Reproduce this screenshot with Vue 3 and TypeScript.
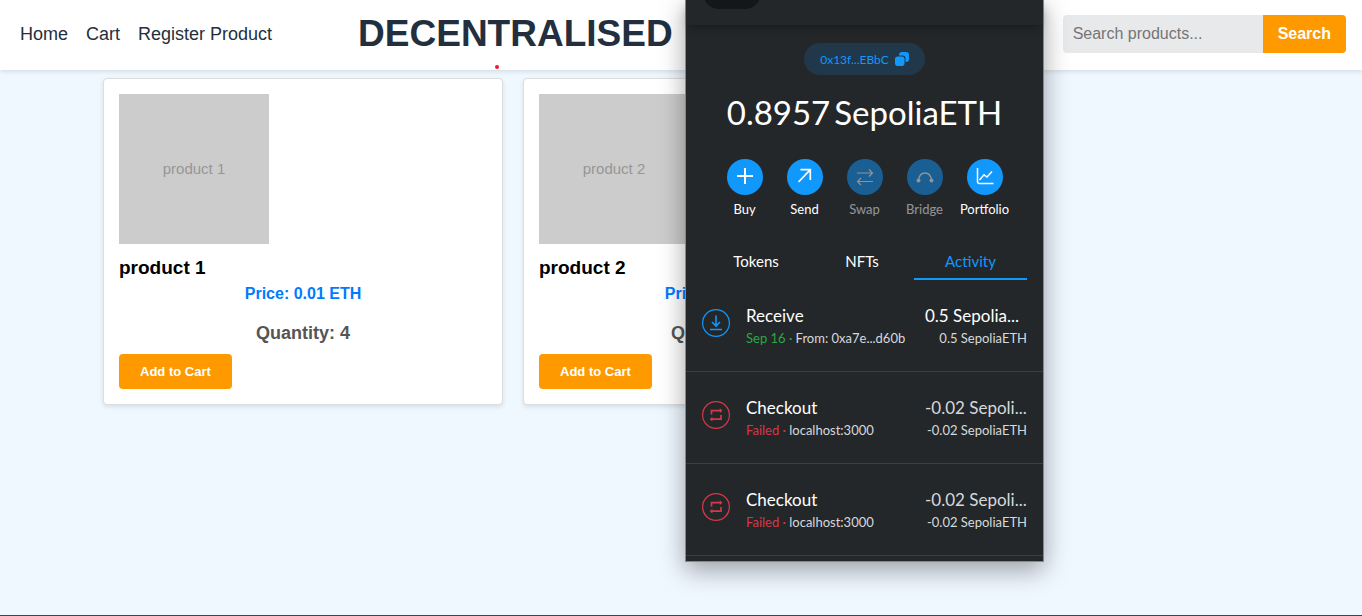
<script setup lang="ts">
import { ref } from 'vue'

interface Product {
  name: string
  price: string
  quantity: number
}

interface WalletAction {
  label: string
  icon: 'buy' | 'send' | 'swap' | 'bridge' | 'portfolio'
  disabled: boolean
}

interface Activity {
  id: number
  kind: 'receive' | 'checkout'
  title: string
  status: string
  detail: string
  amount: string
  fullAmount: string
}

const query = ref('')
const activeTab = ref('Activity')
const tabs: string[] = ['Tokens', 'NFTs', 'Activity']

const products: Product[] = [
  { name: 'product 1', price: '0.01', quantity: 4 },
  { name: 'product 2', price: '0.01', quantity: 10 },
]

const actions: WalletAction[] = [
  { label: 'Buy', icon: 'buy', disabled: false },
  { label: 'Send', icon: 'send', disabled: false },
  { label: 'Swap', icon: 'swap', disabled: true },
  { label: 'Bridge', icon: 'bridge', disabled: true },
  { label: 'Portfolio', icon: 'portfolio', disabled: false },
]

const activities: Activity[] = [
  { id: 1, kind: 'receive', title: 'Receive', status: 'Sep 16', detail: 'From: 0xa7e...d60b', amount: '0.5 Sepolia...', fullAmount: '0.5 SepoliaETH' },
  { id: 2, kind: 'checkout', title: 'Checkout', status: 'Failed', detail: 'localhost:3000', amount: '-0.02 Sepoli...', fullAmount: '-0.02 SepoliaETH' },
  { id: 3, kind: 'checkout', title: 'Checkout', status: 'Failed', detail: 'localhost:3000', amount: '-0.02 Sepoli...', fullAmount: '-0.02 SepoliaETH' },
]
</script>

<template>
  <div class="page">
    <header class="topbar">
      <nav class="nav">
        <a href="#home">Home</a>
        <a href="#cart">Cart</a>
        <a href="#register">Register Product</a>
      </nav>
      <h1 class="brand">DECENTRALISED</h1>
      <form class="search" role="search" @submit.prevent>
        <input v-model="query" type="text" placeholder="Search products..." aria-label="Search products" />
        <button type="submit">Search</button>
      </form>
      <span class="marker"></span>
    </header>

    <main class="products">
      <article v-for="product in products" :key="product.name" class="card">
        <div class="thumb">{{ product.name }}</div>
        <h2>{{ product.name }}</h2>
        <p class="price">Price: {{ product.price }} ETH</p>
        <p class="quantity">Quantity: {{ product.quantity }}</p>
        <button type="button">Add to Cart</button>
      </article>
    </main>

    <aside class="wallet">
      <div class="wallet-head"><span class="network"></span></div>

      <button type="button" class="address">
        <span>0x13f...EBbC</span>
        <svg width="14" height="14" viewBox="0 0 14 14" aria-hidden="true">
          <path d="M7 0h4a3 3 0 0 1 3 3v4a3 3 0 0 1-3 3h-.5V6.500a3 3 0 0 0-3-3H4V3a3 3 0 0 1 3-3z" fill="currentColor" />
          <rect x="0" y="4.500" width="9.500" height="9.500" rx="2.800" fill="currentColor" />
        </svg>
      </button>

      <div class="balance"><span>0.8957</span><span>SepoliaETH</span></div>

      <div class="actions">
        <button v-for="action in actions" :key="action.label" type="button" class="action" :disabled="action.disabled">
          <span class="disc">
            <svg width="24" height="24" viewBox="0 0 24 24" fill="none" stroke="currentColor" aria-hidden="true">
              <path v-if="action.icon === 'buy'" d="M12 3v16M4 11h16" stroke-width="2" />
              <path v-else-if="action.icon === 'send'" d="M5.500 17 17.300 4.700M7.500 4.700h9.800v10.300" stroke-width="1.700" />
              <path v-else-if="action.icon === 'swap'" d="M4 8h15.500M16 4.500 19.500 8 16 11.500M20 16.500H4.500M8 13l-3.500 3.500L8 20" stroke-width="1.200" />
              <template v-else-if="action.icon === 'bridge'">
                <path d="M5.500 15.500C6 10.500 8.500 8 12 8s6 2.500 6.500 7.500" stroke-width="1.300" />
                <circle cx="5.500" cy="15.500" r="2" fill="currentColor" stroke="none" />
                <circle cx="18.500" cy="15.500" r="2" fill="currentColor" stroke="none" />
              </template>
              <path v-else d="M4.500 3v13.500q0 2 2 2H20.500M6.500 15 11 9.800l3 2.200 5-5.500" stroke-width="1.500" />
            </svg>
          </span>
          <span class="action-label">{{ action.label }}</span>
        </button>
      </div>

      <div class="tabs" role="tablist">
        <button
          v-for="tab in tabs"
          :key="tab"
          type="button"
          role="tab"
          :aria-selected="tab === activeTab"
          :class="{ active: tab === activeTab }"
          @click="activeTab = tab"
        >
          {{ tab }}
        </button>
      </div>

      <ul class="activity">
        <li v-for="item in activities" :key="item.id" :class="item.kind">
          <svg class="badge" width="28" height="28" viewBox="0 0 28 28" fill="none" stroke="currentColor" aria-hidden="true">
            <circle cx="14" cy="14" r="13.400" stroke-width="1.200" />
            <path v-if="item.kind === 'receive'" d="M14 6.500v10.500M10 13l4 4 4-4M8 20.500h12" stroke-width="1.600" />
            <template v-else>
              <path d="M9.500 13.500V9.700H18.500M19 14v4.200H9.500" stroke-width="1.700" />
              <path d="M17.800 7.300 20.500 9.700 17.800 12.100zM10.400 15.800 7.700 18.200l2.700 2.400z" fill="currentColor" stroke="none" />
            </template>
          </svg>
          <div class="info">
            <strong>{{ item.title }}</strong>
            <small><span class="status">{{ item.status }} ·</span> {{ item.detail }}</small>
          </div>
          <div class="amount">
            <strong>{{ item.amount }}</strong>
            <small>{{ item.fullAmount }}</small>
          </div>
        </li>
      </ul>
    </aside>
  </div>
</template>

<style>
body {
  margin: 0;
}
</style>

<style scoped>
.page {
  position: relative;
  box-sizing: border-box;
  min-height: 100vh;
  overflow: hidden;
  background: #eff7ff;
  border-bottom: 1px solid #3c4656;
  font-family: "Liberation Sans", Arial, sans-serif;
}

button {
  margin: 0;
  border: 0;
  font-family: inherit;
  cursor: pointer;
}

.topbar {
  position: relative;
  display: flex;
  align-items: center;
  box-sizing: border-box;
  height: 70px;
  padding: 0 16px 2px 20px;
  background: #fff;
  box-shadow: 0 2px 4px rgba(0, 0, 0, 0.1);
}

.nav {
  display: flex;
  gap: 18px;
}

.nav a {
  color: #232f3e;
  font-size: 18px;
  line-height: 24px;
  text-decoration: none;
  white-space: nowrap;
}

.brand {
  flex: 1;
  margin: 0 86px;
  color: #232f3e;
  font-size: 37px;
  line-height: 44px;
}

.search {
  display: flex;
  height: 38px;
}

.search input {
  box-sizing: border-box;
  width: 200px;
  padding: 0 10px;
  border: 0;
  border-radius: 4px 0 0 4px;
  background: #e8e9eb;
  color: #232f3e;
  font-family: inherit;
  font-size: 16px;
}

.search input::placeholder {
  color: #757575;
}

.search button {
  padding: 0 15px;
  border-radius: 0 4px 4px 0;
  background: #f90;
  color: #fff;
  font-size: 16px;
  font-weight: bold;
}

.marker {
  position: absolute;
  left: 495px;
  top: 65px;
  width: 4px;
  height: 4px;
  border-radius: 50%;
  background: #ed1c24;
}

.products {
  display: flex;
  gap: 20px;
  padding: 8px 103px;
}

.card {
  box-sizing: border-box;
  width: 400px;
  padding: 15px;
  border: 1px solid #ddd;
  border-radius: 4px;
  background: #fff;
  box-shadow: 0 2px 4px rgba(0, 0, 0, 0.1);
}

.thumb {
  display: flex;
  align-items: center;
  justify-content: center;
  box-sizing: border-box;
  width: 150px;
  height: 150px;
  padding-bottom: 2px;
  background: #ccc;
  color: #969696;
  font-size: 15px;
}

.card h2 {
  margin: 13px 0 6px;
  color: #000;
  font-size: 19px;
  line-height: 22px;
}

.card p {
  margin: 0;
  font-weight: bold;
  text-align: center;
}

.card .price {
  color: #007bff;
  font-size: 16px;
  line-height: 18px;
}

.card .quantity {
  margin: 20px 0 11px;
  color: #555;
  font-size: 18px;
  line-height: 20px;
}

.card button {
  display: block;
  height: 35px;
  padding: 0 21px;
  border-radius: 4px;
  background: #f90;
  color: #fff;
  font-size: 13px;
  font-weight: bold;
}

.wallet {
  position: absolute;
  top: 0;
  right: 318px;
  display: flex;
  flex-direction: column;
  align-items: center;
  width: 357px;
  padding-bottom: 5px;
  border: 1px solid #85888b;
  border-top: 0;
  background: #24272a;
  box-shadow: 0 8px 24px rgba(0, 0, 0, 0.36);
  color: #fff;
  font-family: Lato, "Liberation Sans", sans-serif;
}

.wallet-head {
  display: flex;
  align-items: flex-end;
  align-self: stretch;
  box-sizing: border-box;
  height: 25px;
  padding: 0 17px 16px;
  overflow: hidden;
  box-shadow: 0 4px 12px -4px rgba(0, 0, 0, 0.5);
}

.network {
  flex: none;
  width: 58px;
  height: 32px;
  border-radius: 16px;
  background: #141618;
}

.address {
  display: flex;
  align-items: center;
  gap: 6px;
  height: 32px;
  margin-top: 18px;
  padding: 0 16px;
  border-radius: 16px;
  background: #21374a;
  color: #1098fc;
  font-size: 12px;
}

.balance {
  display: flex;
  gap: 4px;
  margin-top: 17px;
  font-size: 33px;
  line-height: 40px;
}

.actions {
  display: flex;
  gap: 24px;
  margin-top: 27px;
}

.action {
  display: flex;
  flex-direction: column;
  align-items: center;
  gap: 6px;
  width: 36px;
  padding: 0;
  background: none;
  color: #fff;
}

.action:disabled {
  opacity: 0.5;
  cursor: default;
}

.disc {
  display: flex;
  align-items: center;
  justify-content: center;
  width: 36px;
  height: 36px;
  border-radius: 50%;
  background: #1098fc;
}

.action-label {
  font-size: 13px;
  line-height: 16px;
}

.tabs {
  display: grid;
  grid-template-columns: 108fr 104fr 113fr;
  align-self: stretch;
  margin: 25px 16px 0;
}

.tabs button {
  padding: 9px 0 7px;
  border-bottom: 2px solid transparent;
  background: none;
  color: #fff;
  font-size: 15px;
  line-height: 20px;
}

.tabs .active {
  border-color: #1098fc;
  color: #1098fc;
}

.activity {
  align-self: stretch;
  margin: 0;
  padding: 0;
  list-style: none;
}

.activity li {
  display: flex;
  padding: 24px 16px 25px;
  border-bottom: 1px solid #3b4046;
}

.badge {
  flex: none;
  margin: 5px 16px 0 0;
  color: #1098fc;
}

.checkout .badge {
  color: #d73847;
}

.info,
.amount {
  display: flex;
  flex-direction: column;
  gap: 2px;
  white-space: nowrap;
}

.info {
  flex: 1;
}

.amount {
  width: 102px;
}

.activity strong {
  font-size: 17px;
  font-weight: normal;
  line-height: 24px;
}

.activity small {
  color: #d6d9dc;
  font-size: 13px;
  line-height: 16px;
}

.amount small {
  text-align: right;
}

.checkout .amount strong {
  color: #d6d9dc;
}

.status {
  color: #28a745;
}

.checkout .status {
  color: #d73847;
}
</style>
